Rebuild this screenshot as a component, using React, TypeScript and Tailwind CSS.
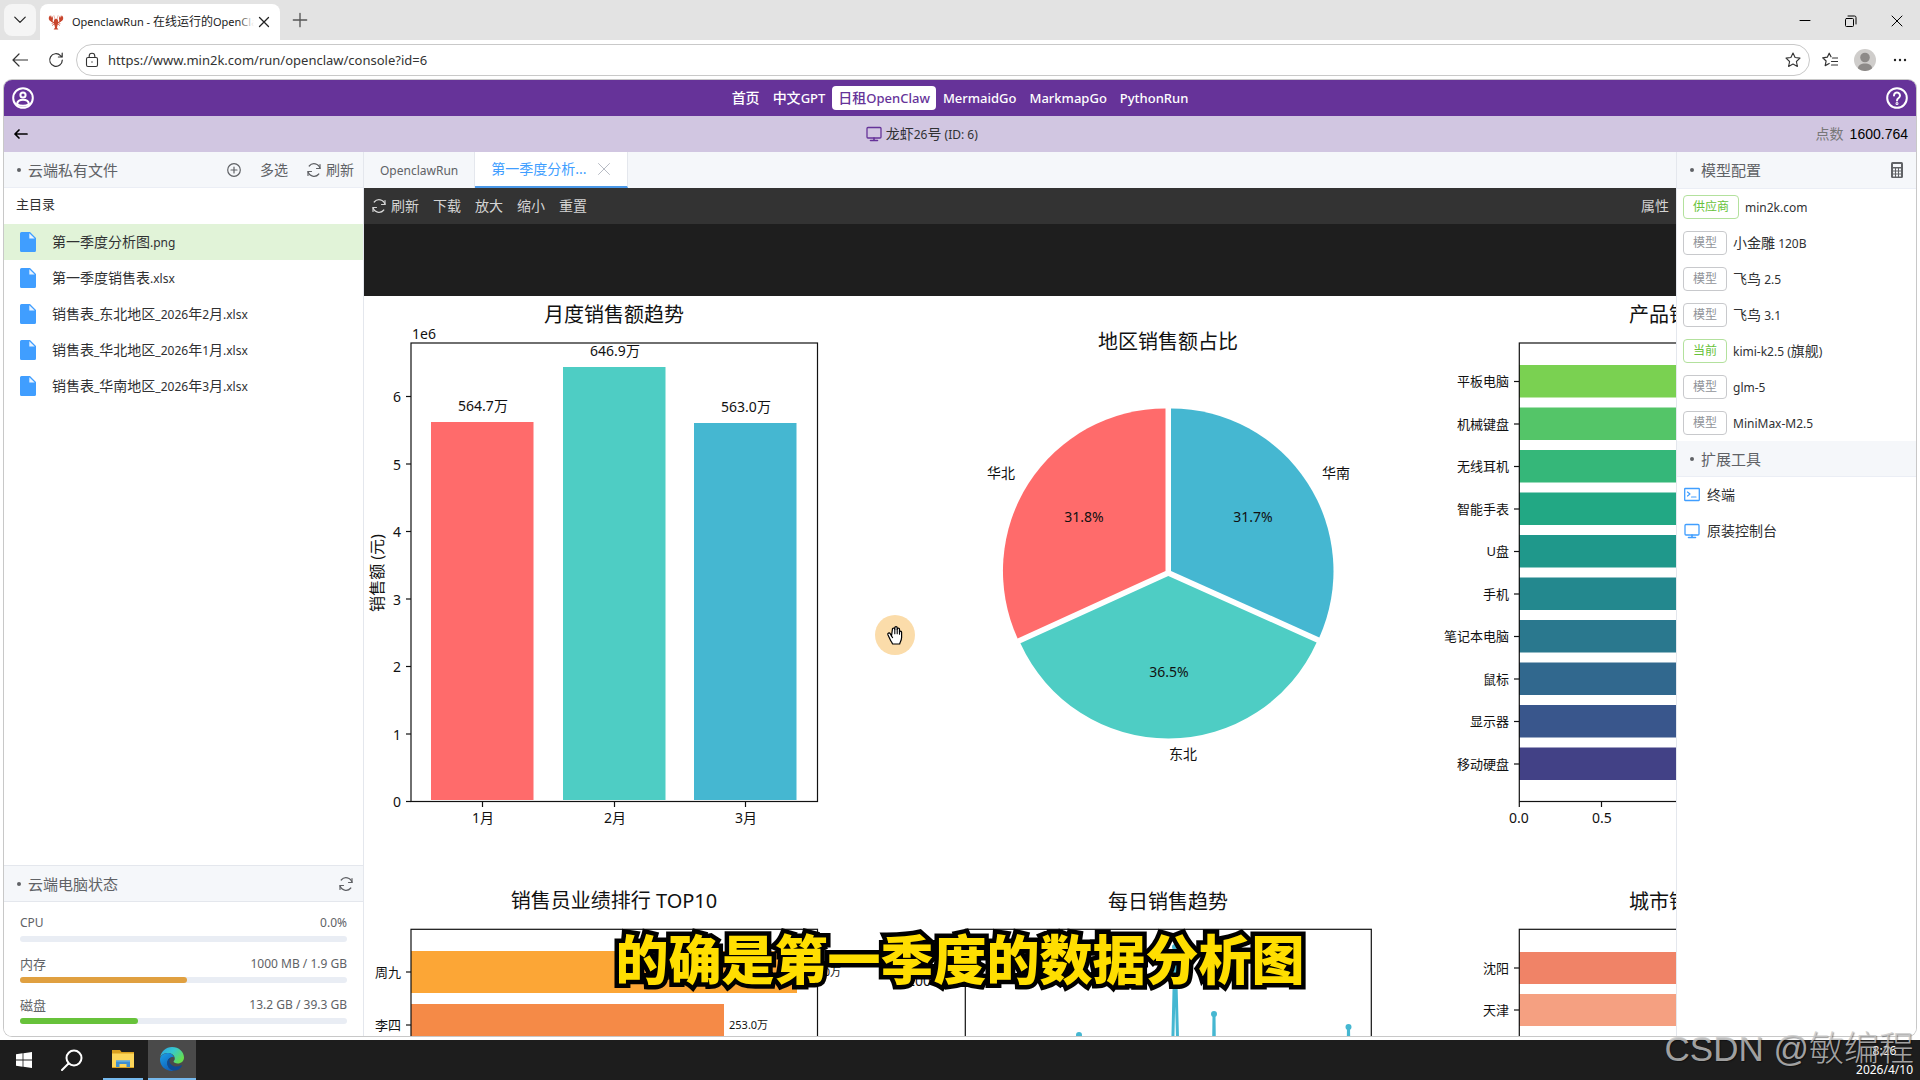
import type { ReactNode } from "react";

const CJK = /([\u3000-\u9fff]+)/;

/** Sets Latin runs a little smaller than the Chinese text around them. */
function Mixed({ text, latin = "text-[12px]" }: { text: string; latin?: string }) {
  return (
    <>
      {text.split(CJK).map((part, i) =>
        i % 2 === 1 ? part : part ? <span key={i} className={latin}>{part}</span> : null
      )}
    </>
  );
}

/* ---------------------------------------------------------------- icons */

function Icon({ children, className, box = 24, width = 2 }: { children: ReactNode; className: string; box?: number; width?: number }) {
  return (
    <svg viewBox={`0 0 ${box} ${box}`} className={`${className} shrink-0`} fill="none" stroke="currentColor" strokeWidth={width} strokeLinecap="round" strokeLinejoin="round" aria-hidden="true">
      {children}
    </svg>
  );
}

function Lobster() {
  return (
    <svg viewBox="0 0 16 16" className="size-4 shrink-0" aria-hidden="true">
      <g fill="#c8452c">
        <path d="M2.2 1.2C.6 2.6.2 5 1.6 6.6c.8.8 2 1 3 .8l.2-1.6C5.400 4.200 4.600 2.400 3.800 1.400L3.400 3.800z" />
        <path d="M13.800 1.200c1.600 1.400 2 3.800.6 5.400-.8.8-2 1-3 .8l-.2-1.600c-.6-1.600.2-3.400 1-4.400l.4 2.400z" />
        <path d="M3.600 6.400l2.600 2 .2 1-3.600-2zM12.400 6.400l-2.600 2-.2 1 3.600-2z" />
        <ellipse cx="8" cy="8.200" rx="2.200" ry="3.400" />
        <path d="M6.400 10.600h3.200l-.6 3.200 1.400 1.800H5.600L7 13.800z" />
      </g>
      <path d="M7 5.200 5.800 1.200M9 5.200l1.200-4" stroke="#dd8a78" strokeWidth=".6" fill="none" />
      <path d="M6 8.500 3.600 9.600M6.200 10 4 11.600M10 8.500l2.400 1.100M9.800 10l2.200 1.600" stroke="#c8452c" strokeWidth=".7" />
    </svg>
  );
}

function Refresh({ className }: { className: string }) {
  return (
    <Icon className={className} box={16} width={1}>
      <path d="M2 9.500A6.200 6.200 0 0 0 12.800 12M14 6.500A6.200 6.200 0 0 0 3.200 4" strokeWidth="1.200" />
      <path d="M2 13.500V9.500h3.500M14 2.500v4h-3.500" strokeWidth="1.200" />
    </Icon>
  );
}

function Monitor({ className }: { className: string }) {
  return (
    <Icon className={className} box={16} width={1}>
      <rect x="1" y="1.500" width="14" height="10.500" rx="1" strokeWidth="1.300" />
      <path d="M8 12v2.200M4.500 14.500h7" strokeWidth="1.600" />
    </Icon>
  );
}

function FileIcon() {
  return (
    <svg viewBox="0 0 16 20" className="h-5 w-4 shrink-0" aria-hidden="true">
      <path d="M1.500 0H10l6 6v12.500a1.500 1.500 0 0 1-1.500 1.500h-13A1.500 1.500 0 0 1 0 18.500v-17A1.500 1.500 0 0 1 1.500 0z" fill="#409eff" />
      <path d="M9.300 1.200v5.300h5.400z" fill="#eaf4ff" />
    </svg>
  );
}

function EdgeLogo() {
  return (
    <svg viewBox="0 0 24 24" className="size-6" aria-hidden="true">
      <defs>
        <linearGradient id="edgeTop" x1="0" y1="0" x2="1" y2=".6">
          <stop offset="0" stopColor="#2b9fe6" />
          <stop offset=".5" stopColor="#36c8cf" />
          <stop offset="1" stopColor="#66de4c" />
        </linearGradient>
        <linearGradient id="edgeLeft" x1="0" y1="0" x2=".6" y2="1">
          <stop offset="0" stopColor="#1ba0e8" />
          <stop offset="1" stopColor="#0f5fb8" />
        </linearGradient>
      </defs>
      <path d="M.2 10.500C1 4.500 6 0 12 0c7 0 12 5 12 10.500 0 3.800-3 6-6.200 6-2.600 0-4.200-.9-4.200-1.900 0-.6 1.200-1 1.200-2.800C14.800 8.500 12 6 8 6 4 6 1 8 .2 10.500z" fill="url(#edgeTop)" />
      <path d="M8 6C3.500 6 0 9 0 12.500 0 19 5.500 24 12 24c1 0 2-.1 3-.4-4.500-.1-7.800-3.600-7.800-7.600 0-2.600 1.400-5 4-5.800.9-.3 2-.2 2.900.3C13.200 8 11 6 8 6z" fill="url(#edgeLeft)" />
      <path d="M7.200 16c0-2.600 1.500-5 4-5.800-2 1.800-2.200 4.200-1 6.200 2 3.200 6.800 4 10.600 2 .7-.4 1.400.2.9.9C20 22 17.500 23.600 15 23.600c-4.500 0-7.800-3.600-7.800-7.600z" fill="#0d4a94" />
    </svg>
  );
}

/* ---------------------------------------------------------------- browser */

function TabStrip() {
  return (
    <div className="flex h-10 shrink-0 items-end bg-[#e3e3e3] pl-1 text-[#222]">
      <button aria-label="标签页操作" className="mb-1 flex size-8 items-center justify-center rounded-lg bg-[#f5f5f5]">
        <Icon className="size-3.5" width={2}><path d="m3 7 9 9 9-9" /></Icon>
      </button>
      <div className="ml-1 flex h-9 w-60 items-center gap-2 rounded-t-lg bg-white pr-2.5 pl-2">
        <Lobster />
        <span className="relative flex-1 overflow-hidden text-[12px] leading-5 whitespace-nowrap">
          <Mixed text="OpenclawRun - 在线运行的OpenClaw" latin="text-[11px]" />
          <span className="absolute inset-y-0 right-0 w-4 bg-gradient-to-r from-transparent to-white" />
        </span>
        <button aria-label="关闭标签页" className="-ml-1">
          <Icon className="size-3" box={12} width={1}><path d="m1.500 1.500 9 9M10.500 1.500l-9 9" strokeWidth="1.300" /></Icon>
        </button>
      </div>
      <button aria-label="新建标签页" className="mb-3 ml-3">
        <Icon className="size-4 text-[#555]" width={2}><path d="M12 2v20M2 12h20" /></Icon>
      </button>
      <div className="mb-3 ml-auto flex items-center gap-8 pr-4 text-black">
        <button aria-label="最小化"><Icon className="size-3.5" box={14} width={1}><path d="M2 6.500h10" /></Icon></button>
        <button aria-label="还原">
          <Icon className="size-3.5" box={14} width={1}>
            <rect x="1.500" y="4.500" width="8" height="8" rx="1" />
            <path d="M4 2h6.500a1.500 1.500 0 0 1 1.500 1.500V10" />
          </Icon>
        </button>
        <button aria-label="关闭"><Icon className="size-3.5" box={14} width={1}><path d="m2 2 10 10M12 2 2 12" /></Icon></button>
      </div>
    </div>
  );
}

function AddressBar() {
  return (
    <div className="flex h-10 shrink-0 items-center bg-white text-[#333]">
      <button aria-label="后退" className="ml-3">
        <Icon className="size-4" box={16} width={1}><path d="M15.500 8H1M7 2 1 8l6 6" strokeWidth="1.200" /></Icon>
      </button>
      <button aria-label="刷新页面" className="ml-5">
        <Icon className="size-4" box={16} width={1}>
          <path d="M14.300 8A6.300 6.300 0 1 1 12.500 3.600L14 5M14.200 1.200V5h-3.800" strokeWidth="1.200" />
        </Icon>
      </button>
      <div className="ml-3 flex h-8 flex-1 items-center gap-2 rounded-full border border-[#c9c9c9] pr-2 pl-[7px]">
        <Icon className="size-4" box={16} width={1}>
          <rect x="2.500" y="5.500" width="11" height="9" rx="1.500" strokeWidth="1.100" />
          <path d="M5.200 5.500V4a2.800 2.800 0 0 1 5.600 0v1.500" strokeWidth="1.100" />
          <circle cx="8" cy="10" r=".7" fill="currentColor" stroke="none" />
        </Icon>
        <input aria-label="地址栏" readOnly value="https://www.min2k.com/run/openclaw/console?id=6" className="flex-1 bg-transparent text-[13px] leading-5 text-[#333] outline-none" />
        <button aria-label="收藏此页">
          <Icon className="size-4" box={16} width={1}>
            <path d="m8 1 2.100 4.500 4.900.6-3.600 3.400 1 4.900L8 12l-4.400 2.400 1-4.900L1 6.100l4.900-.6z" strokeWidth="1.100" />
          </Icon>
        </button>
      </div>
      <button aria-label="收藏夹" className="ml-3">
        <Icon className="size-4" box={16} width={1}>
          <path d="M9 4.800 7.200 1.200 5.300 5.200l-4.600.6 3.400 3.200-.9 4.600 4-2.100M10.500 6H15.500M9.500 9.500h6M9.500 13h6" strokeWidth="1.200" />
        </Icon>
      </button>
      <button aria-label="个人资料" className="ml-4">
        <svg viewBox="0 0 22 22" className="size-[22px]" aria-hidden="true">
          <circle cx="11" cy="11" r="11" fill="#cfcdcb" />
          <circle cx="11" cy="8.500" r="4.800" fill="#8d8a88" />
          <path d="M4 19.500c0-3.500 3-5 7-5s7 1.500 7 5a11 11 0 0 1-14 0z" fill="#8d8a88" />
        </svg>
      </button>
      <button aria-label="设置及其他" className="mr-3 ml-4">
        <svg viewBox="0 0 16 16" className="size-4" fill="#222" aria-hidden="true">
          <circle cx="3" cy="8" r="1.200" /><circle cx="8" cy="8" r="1.200" /><circle cx="13" cy="8" r="1.200" />
        </svg>
      </button>
    </div>
  );
}

/* ---------------------------------------------------------------- page headers */

const NAV = ["首页", "中文GPT", "日租OpenClaw", "MermaidGo", "MarkmapGo", "PythonRun"];

function SiteHeader() {
  return (
    <header className="grid h-9 shrink-0 grid-cols-[1fr_auto_1fr] items-center bg-[#663399] px-2 text-white">
      <button aria-label="账户" className="justify-self-start">
        <Icon className="size-[22px]" box={22} width={2}>
          <circle cx="11" cy="11" r="9.800" /><circle cx="11" cy="8" r="2.600" />
          <path d="M5 17c.5-3 3-4.200 6-4.200s5.500 1.200 6 4.200c-3 2.300-9 2.300-12 0z" />
        </Icon>
      </button>
      <nav className="flex items-center gap-px text-[14px] leading-6 font-medium">
        {NAV.map((item) => (
          <a key={item} href="#" className={item === "日租OpenClaw" ? "rounded bg-white px-1.5 text-[#663399]" : "px-1.5"}>
            <Mixed text={item} latin="text-[13px]" />
          </a>
        ))}
      </nav>
      <button aria-label="帮助" className="justify-self-end">
        <Icon className="size-[22px]" box={22} width={2}>
          <circle cx="11" cy="11" r="9.800" />
          <path d="M8 8.500a3 3 0 1 1 4.600 2.500c-1 .7-1.600 1.200-1.600 2.500" />
          <circle cx="11" cy="16.500" r=".5" />
        </Icon>
      </button>
    </header>
  );
}

function MachineHeader() {
  return (
    <div className="flex h-9 shrink-0 items-center justify-between bg-[#d1c6e1] px-2 text-[14px] leading-6">
      <button aria-label="返回" className="text-black">
        <Icon className="size-4" box={16} width={2}><path d="M15 8H3M7 4 3 8l4 4" strokeWidth="1.700" /></Icon>
      </button>
      <h1 className="flex items-center gap-1 text-[#303133]">
        <Monitor className="size-4 text-[#663399]" />
        <span><Mixed text="龙虾26号 (ID: 6)" /></span>
      </h1>
      <div className="flex items-center gap-1.5">
        <span className="text-[#777]">点数</span>
        <span className="font-['Liberation_Sans',sans-serif] text-black">1600.764</span>
      </div>
    </div>
  );
}

/* ---------------------------------------------------------------- left panel */

function PanelTitle({ children }: { children: ReactNode }) {
  return (
    <h2 className="flex items-center gap-[7px] text-[15px] leading-6 text-[#606266]">
      <span className="size-1 rounded-full bg-[#606266]" />
      {children}
    </h2>
  );
}

const FILES = ["第一季度分析图.png", "第一季度销售表.xlsx", "销售表_东北地区_2026年2月.xlsx", "销售表_华北地区_2026年1月.xlsx", "销售表_华南地区_2026年3月.xlsx"];

const METERS = [
  { name: "CPU", value: "0.0%", percent: 0, bar: "bg-[#67c23a]" },
  { name: "内存", value: "1000 MB / 1.9 GB", percent: 51, bar: "bg-[#e0a040]" },
  { name: "磁盘", value: "13.2 GB / 39.3 GB", percent: 36, bar: "bg-[#67c23a]" },
];

function FilePanel() {
  return (
    <aside className="flex w-[360px] shrink-0 flex-col border-r border-[#e4e7ed] bg-white">
      <div className="flex h-9 items-center border-b border-[#ebeef5] bg-[#f5f7fa] pr-[9px] pl-[13px] text-[14px] leading-6 text-[#606266]">
        <PanelTitle>云端私有文件</PanelTitle>
        <button aria-label="新建" className="ml-auto">
          <Icon className="size-4" box={16} width={1}><circle cx="8" cy="8" r="6.300" strokeWidth="1.200" /><path d="M8 5v6M5 8h6" strokeWidth="1.200" /></Icon>
        </button>
        <button className="ml-[18px]">多选</button>
        <button className="ml-[18px] flex items-center gap-1"><Refresh className="size-4" />刷新</button>
      </div>
      <div className="flex h-9 items-start px-3 pt-1 text-[13px] leading-6 text-[#303133]">主目录</div>
      <ul className="flex-1">
        {FILES.map((name, i) => (
          <li key={name}>
            <button className={`flex h-9 w-full items-center gap-4 px-4 text-left text-[14px] leading-6 text-[#303133] ${i === 0 ? "bg-[#e1f3d8]" : ""}`}>
              <FileIcon />
              <span><Mixed text={name} /></span>
            </button>
          </li>
        ))}
      </ul>
      <section>
        <div className="flex h-[37px] items-center justify-between border-y border-[#e4e7ed] bg-[#f5f7fa] pr-[9px] pl-[13px] text-[#606266]">
          <PanelTitle>云端电脑状态</PanelTitle>
          <button aria-label="刷新状态"><Refresh className="size-4" /></button>
        </div>
        <div className="flex flex-col gap-3 px-4 pt-2.5 pb-3 text-[12px] leading-5 text-[#606266]">
          {METERS.map((m) => (
            <div key={m.name} className="flex flex-col gap-[3px]">
              <div className="flex items-center justify-between">
                <span className="text-[13px]"><Mixed text={m.name} /></span>
                <span>{m.value}</span>
              </div>
              <div className="h-1.5 rounded-full bg-[#e9edf4]" role="meter" aria-label={m.name} aria-valuenow={m.percent}>
                <div className={`h-1.5 rounded-full ${m.bar}`} style={{ width: `${m.percent}%` }} />
              </div>
            </div>
          ))}
        </div>
      </section>
    </aside>
  );
}

/* ---------------------------------------------------------------- chart sheet */

type Anchor = "start" | "middle" | "end";

function Label({ x, y, children, size = 14, anchor = "middle" }: { x: number; y: number; children: ReactNode; size?: number; anchor?: Anchor }) {
  return <text x={x} y={y} fontSize={size} textAnchor={anchor} dominantBaseline="central">{children}</text>;
}

const MONTHS = [
  { name: "1月", label: "564.7万", x: 67, top: 126, fill: "#ff6b6b" },
  { name: "2月", label: "646.9万", x: 199, top: 71, fill: "#4ecdc4" },
  { name: "3月", label: "563.0万", x: 330, top: 127, fill: "#45b7d1" },
];

const PRODUCTS = [
  ["平板电脑", "#7ad151"],
  ["机械键盘", "#54c568"],
  ["无线耳机", "#35b779"],
  ["智能手表", "#22a884"],
  ["U盘", "#1f988b"],
  ["手机", "#23888e"],
  ["笔记本电脑", "#2a788e"],
  ["鼠标", "#31688e"],
  ["显示器", "#39568c"],
  ["移动硬盘", "#424186"],
];

const SELLERS = [
  { name: "周九", label: "312.0万", y: 655, end: 433, fill: "#fca636" },
  { name: "李四", label: "253.0万", y: 708, end: 360, fill: "#f58a47" },
];

const CITIES = [
  { name: "沈阳", y: 656, fill: "#f08367" },
  { name: "天津", y: 698, fill: "#f5a081" },
];

function ChartSheet() {
  return (
    <svg width="1600" height="1000" viewBox="0 0 1600 1000" className="block max-w-none bg-white font-['Noto_Sans','Noto_Sans_CJK_SC',sans-serif]" fill="#111" role="img" aria-label="第一季度分析图">
      {/* monthly sales */}
      <Label x={250} y={18} size={20}>月度销售额趋势</Label>
      <Label x={48} y={37} anchor="start">1e6</Label>
      {MONTHS.map((m) => (
        <g key={m.name}>
          <rect x={m.x} y={m.top} width="102.500" height={504 - m.top} fill={m.fill} />
          <Label x={m.x + 52} y={m.top - 17}>{m.label}</Label>
          <path d={`M${m.x + 51.500} 506v5`} stroke="#111" strokeWidth="1.200" />
          <Label x={m.x + 52} y={521}>{m.name}</Label>
        </g>
      ))}
      {[0, 1, 2, 3, 4, 5, 6].map((n) => (
        <g key={n}>
          <path d={`M42 ${505.500 - n * 67.500}h5`} stroke="#111" strokeWidth="1.200" />
          <Label x={37} y={505.500 - n * 67.500} anchor="end">{n}</Label>
        </g>
      ))}
      <rect x="47" y="47" width="406.500" height="458.500" fill="none" stroke="#111" strokeWidth="1.200" />
      <g transform="translate(13 277) rotate(-90)"><Label x={0} y={0} size={16}>销售额 (元)</Label></g>

      {/* share by region */}
      <Label x={804} y={45} size={20}>地区销售额占比</Label>
      <path d="M807 275V112.500A162.500 162.500 0 0 1 955.300 341.400z" fill="#45b7d1" />
      <path d="M801.500 275V112.500A162.500 162.500 0 0 0 653.600 342.400z" fill="#ff6b6b" />
      <path d="M804.300 280 952.600 346.500A162.500 162.500 0 0 1 656.400 347.300z" fill="#4ecdc4" />
      <Label x={637} y={176}>华北</Label>
      <Label x={972} y={176}>华南</Label>
      <Label x={819} y={457}>东北</Label>
      <Label x={720} y={220}>31.8%</Label>
      <Label x={889} y={220}>31.7%</Label>
      <Label x={805} y={375}>36.5%</Label>

      {/* products */}
      <Label x={1265} y={18} size={20} anchor="start">产品销售</Label>
      {PRODUCTS.map(([name, fill], i) => (
        <g key={name}>
          <rect x="1155" y={69 + i * 42.500} width="380" height="32.500" fill={fill} />
          <path d={`M1150 ${85.500 + i * 42.500}h5`} stroke="#111" strokeWidth="1.200" />
          <Label x={1145} y={85 + i * 42.500} size={13} anchor="end">{name}</Label>
        </g>
      ))}
      <rect x="1155.300" y="47" width="407" height="458.500" fill="none" stroke="#111" strokeWidth="1.200" />
      <path d="M1155.300 506v5M1237.500 506v5" stroke="#111" strokeWidth="1.200" />
      <Label x={1155} y={521}>0.0</Label>
      <Label x={1238} y={521}>0.5</Label>

      {/* top sellers */}
      <Label x={250} y={604} size={20}>销售员业绩排行 TOP10</Label>
      {SELLERS.map((s) => (
        <g key={s.name}>
          <rect x="47" y={s.y} width={s.end - 47} height="42" fill={s.fill} />
          <path d={`M42 ${s.y + 21}h5`} stroke="#111" strokeWidth="1.200" />
          <Label x={37} y={s.y + 21} size={13} anchor="end">{s.name}</Label>
          <Label x={s.end + 5} y={s.y + 20} size={11} anchor="start">{s.label}</Label>
        </g>
      ))}
      <rect x="47" y="633.300" width="406.500" height="458.500" fill="none" stroke="#111" strokeWidth="1.200" />

      {/* daily trend */}
      <Label x={804} y={605} size={20}>每日销售趋势</Label>
      <Label x={591} y={684} anchor="end">200000</Label>
      <rect x="601.300" y="633.300" width="406" height="458.500" fill="none" stroke="#111" strokeWidth="1.200" />
      <g fill="#45b7d1" stroke="#45b7d1" strokeWidth="3" strokeLinejoin="round">
        <path d="M808.500 760 811 651 814 760M849.500 760l.5-42 .5 42M984 760l.5-29 .5 29M715 760v-22" fill="none" />
        <circle cx="811" cy="651" r="1.500" />
        <circle cx="850" cy="718" r="1.500" />
        <circle cx="984.500" cy="731" r="1.500" />
        <circle cx="715" cy="739" r="1.500" />
      </g>

      {/* cities */}
      <Label x={1265} y={605} size={20} anchor="start">城市销售</Label>
      {CITIES.map((c) => (
        <g key={c.name}>
          <rect x="1155" y={c.y} width="380" height="32" fill={c.fill} />
          <path d={`M1150 ${c.y + 16}h5`} stroke="#111" strokeWidth="1.200" />
          <Label x={1145} y={c.y + 16} size={13} anchor="end">{c.name}</Label>
        </g>
      ))}
      <rect x="1155.300" y="633.300" width="407" height="458.500" fill="none" stroke="#111" strokeWidth="1.200" />
    </svg>
  );
}

function GrabPointer() {
  return (
    <div className="absolute top-[391px] left-[511px] flex size-10 items-center justify-center rounded-full bg-[#fbdcaa]">
      <svg viewBox="0 0 20 20" className="size-5" aria-hidden="true">
        <path d="M6.500 11 5.200 8.600c-.8-1.200-3-.4-2.300 1.200l2.600 5.400c.8 1.600 1.700 2.300 2 3.800h7.200c.1-1.800 1.900-3.400 1.900-6.500V7.200c0-1.500-2-1.500-2.100-.1V4.300c0-1.600-2.300-1.600-2.300 0V2.800c0-1.600-2.400-1.600-2.400 0v1.400c0-1.600-2.500-1.500-2.400.1z" fill="#fff" stroke="#000" strokeWidth="1.200" strokeLinejoin="round" />
        <path d="M9.800 4.200v4.500M12.200 4v4.700M14.500 6.500v2.700M6.500 11l1.100 1.600" stroke="#000" strokeWidth="1.100" fill="none" strokeLinecap="round" />
      </svg>
    </div>
  );
}

function Viewer() {
  return (
    <main className="flex min-w-0 flex-1 flex-col">
      <div className="flex h-9 shrink-0 bg-[#f5f7fa] text-[14px] leading-6" role="tablist">
        <button role="tab" aria-selected="false" className="border-r border-[#e4e7ed] px-4 text-[#606266]"><Mixed text="OpenclawRun" /></button>
        <div className="flex items-center gap-2.5 border-r border-[#e4e7ed] border-b-2 border-b-[#4a98e8] bg-white px-4">
          <button role="tab" aria-selected="true" className="text-[#409eff]">第一季度分析...</button>
          <button aria-label="关闭" className="text-[#b8bcc4]">
            <Icon className="size-3.5" box={14} width={1}><path d="m1.500 1.500 11 11M12.500 1.500l-11 11" /></Icon>
          </button>
        </div>
      </div>
      <div className="flex h-9 shrink-0 items-center gap-3.5 bg-[#333] px-[7px] text-[14px] leading-6 text-[#d4d4d4]">
        <button className="flex items-center gap-1"><Refresh className="size-4" />刷新</button>
        <button>下载</button>
        <button>放大</button>
        <button>缩小</button>
        <button>重置</button>
        <button className="ml-auto">属性</button>
      </div>
      <div className="relative min-h-0 flex-1 overflow-hidden bg-[#1e1e1e] pt-[72px]">
        <ChartSheet />
        <GrabPointer />
      </div>
    </main>
  );
}

/* ---------------------------------------------------------------- right panel */

const MODELS = [
  { tag: "供应商", name: "min2k.com", active: true },
  { tag: "模型", name: "小金雕 120B", active: false },
  { tag: "模型", name: "飞鸟 2.5", active: false },
  { tag: "模型", name: "飞鸟 3.1", active: false },
  { tag: "当前", name: "kimi-k2.5 (旗舰)", active: true },
  { tag: "模型", name: "glm-5", active: false },
  { tag: "模型", name: "MiniMax-M2.5", active: false },
];

function ModelPanel() {
  return (
    <aside className="flex w-60 shrink-0 flex-col border-l border-[#e4e7ed] bg-white text-[14px] leading-6 text-[#303133]">
      <div className="flex h-[37px] items-center justify-between border-b border-[#ebeef5] bg-[#f5f7fa] pr-[13px] pl-[13px]">
        <PanelTitle>模型配置</PanelTitle>
        <button aria-label="计算器">
          <svg viewBox="0 0 12 16" className="h-4 w-3" aria-hidden="true">
            <rect width="12" height="16" rx="1.500" fill="#606266" />
            <path d="M2 2h8v3H2zM2 6.500h2v2H2zM5 6.500h2v2H5zM8 6.500h2v2H8zM2 9.500h2v2H2zM5 9.500h2v2H5zM8 9.500h2v2H8zM2 12.500h2v2H2zM5 12.500h2v2H5zM8 12.500h2v2H8z" fill="#f5f7fa" />
          </svg>
        </button>
      </div>
      <ul>
        {MODELS.map((m) => (
          <li key={m.name} className="flex h-9 items-center gap-1.5 px-1.5">
            <span className={`rounded border px-[9px] text-[12px] leading-[22px] ${m.active ? "border-[#b3e19d] text-[#67c23a]" : "border-[#c8c9cc] text-[#909399]"}`}>{m.tag}</span>
            <span><Mixed text={m.name} /></span>
          </li>
        ))}
      </ul>
      <div className="flex h-9 items-center border-b border-[#ebeef5] bg-[#f5f7fa] pl-[13px]">
        <PanelTitle>扩展工具</PanelTitle>
      </div>
      <button className="flex h-9 items-center gap-[7px] px-[7px]">
        <Icon className="size-4 text-[#409eff]" box={16} width={1}>
          <rect x=".7" y="1.500" width="14.600" height="12" rx=".5" strokeWidth="1.300" />
          <path d="m3.500 5 2.500 2-2.500 2M7.500 10h4.500" strokeWidth="1.200" />
        </Icon>
        终端
      </button>
      <button className="flex h-9 items-center gap-[7px] px-[7px]">
        <Monitor className="size-4 text-[#409eff]" />
        原装控制台
      </button>
    </aside>
  );
}

/* ---------------------------------------------------------------- desktop */

function Taskbar() {
  return (
    <footer className="flex h-10 shrink-0 items-stretch bg-[#1d1d1d] text-white">
      <button aria-label="开始" className="flex w-12 items-center justify-center">
        <svg viewBox="0 0 16 16" className="size-4" fill="#fff" aria-hidden="true">
          <path d="M0 2.200 6.600 1.300v6.300H0zM7.400 1.200 16 0v7.600H7.400zM0 8.400h6.600v6.300L0 13.800zM7.400 8.400H16V16l-8.600-1.200z" />
        </svg>
      </button>
      <button aria-label="搜索" className="flex w-12 items-center justify-center">
        <Icon className="size-[22px]" box={22} width={2}><circle cx="13" cy="9" r="7.500" /><path d="M7.500 14.500 1 21" /></Icon>
      </button>
      <button aria-label="文件资源管理器" className="mx-[7px] flex w-10 items-center justify-center border-b-2 border-[#76b9ed]">
        <svg viewBox="0 0 22 18" className="h-[18px] w-[22px]" aria-hidden="true">
          <path d="M0 0h8l1.500 2H22v16H0z" fill="#d9a01f" />
          <path d="M0 3.500h22V17H0z" fill="#fcd65a" />
          <path d="M4 10.500h14V17h-3.500v-3h-7v3H4z" fill="#3e8fd0" />
          <path d="M4 10.500h14v1.200H4z" fill="#64b3ea" />
        </svg>
      </button>
      <button aria-label="Microsoft Edge" className="-ml-0.5 flex w-12 items-center justify-center border-b-2 border-[#76b9ed] bg-[#4a4a4a]">
        <EdgeLogo />
      </button>
      <div className="ml-auto flex flex-col items-center justify-center pr-[7px] text-[12px] leading-[19px]">
        <span>8:26</span>
        <span>2026/4/10</span>
      </div>
    </footer>
  );
}

export default function App() {
  return (
    <div className="relative flex h-screen flex-col overflow-hidden bg-white font-['Noto_Sans','Noto_Sans_CJK_SC',sans-serif]">
      <TabStrip />
      <AddressBar />
      <div className="mx-1 mb-1 flex min-h-0 flex-1 flex-col overflow-hidden rounded-lg shadow-[0_0_0_1px_#c8c8c8]">
        <SiteHeader />
        <MachineHeader />
        <div className="flex min-h-0 flex-1">
          <FilePanel />
          <Viewer />
          <ModelPanel />
        </div>
      </div>
      <Taskbar />
      <p className="pointer-events-none absolute inset-x-0 bottom-[84px] text-center text-[53px] leading-[72px] font-black text-[#ffde00] [paint-order:stroke_fill] [-webkit-text-stroke:9px_#000]">
        的确是第一季度的数据分析图
      </p>
      <p className="pointer-events-none absolute right-1.5 bottom-1.5 font-['Liberation_Sans','Noto_Sans_CJK_SC',sans-serif] text-[35px] leading-[50px] font-light text-[#c8c8c8]/80 [text-shadow:1px_1px_1px_rgba(0,0,0,0.4)]">
        CSDN @敏编程
      </p>
    </div>
  );
}
